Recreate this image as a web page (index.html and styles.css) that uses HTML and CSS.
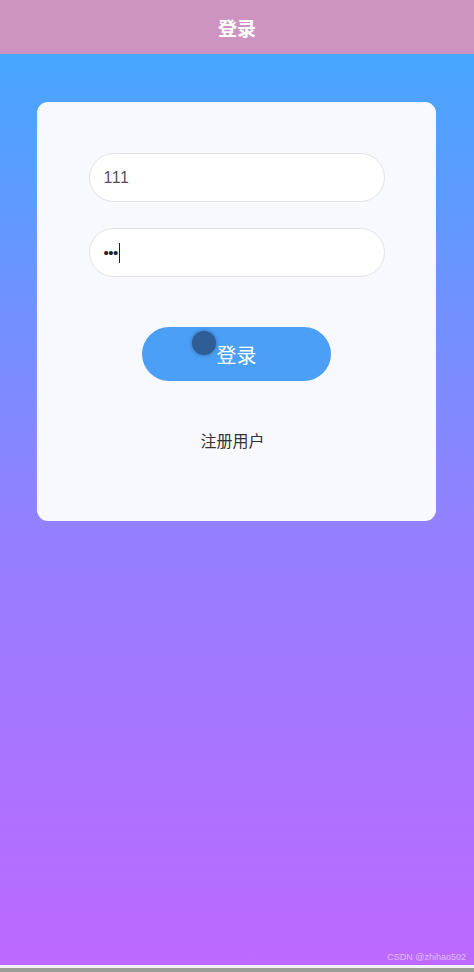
FILE: index.html
```html
<!DOCTYPE html>
<html lang="zh">
<head>
<meta charset="utf-8">
<link rel="stylesheet" href="styles.css">
</head>
<body>
<div class="page">
  <header class="topbar">登录</header>
  <main class="content">
    <section class="card">
      <div class="field"><span class="value">111</span></div>
      <div class="field"><span class="dots">•••</span><span class="caret"></span></div>
      <div class="btn-row">
        <div class="btn">登录<span class="ripple"></span></div>
      </div>
      <div class="register">注册用户</div>
    </section>
    <div class="watermark">CSDN @zhihao502</div>
  </main>
  <div class="bottom-white"></div>
  <div class="bottom-gray"></div>
</div>
</body>
</html>
```
FILE: styles.css
```css
html, body { margin: 0; padding: 0; }
body { font-family: "Liberation Sans", "Noto Sans CJK SC", sans-serif; }
.page { width: 474px; height: 972px; display: flex; flex-direction: column; overflow: hidden; }
.topbar {
  height: 54px; flex: none; background: #cd94c2; color: #fff;
  font-size: 19px; font-weight: bold; display: flex; align-items: center; justify-content: center;
  font-family: "Noto Sans CJK SC", sans-serif;
}
.content {
  flex: 1; position: relative;
  background: linear-gradient(to bottom, #47a6fe 0%, #9480fe 52%, #bd69ff 100%);
  padding: 48px 38px 0 37px;
}
.card {
  background: #f8f9fe; border-radius: 11px; height: 419px;
  display: flex; flex-direction: column; align-items: center;
  padding-top: 51px; box-sizing: border-box;
}
.field {
  width: 296px; height: 49px; box-sizing: border-box; border: 1px solid #e2e2e6;
  border-radius: 25px; background: #fff; display: flex; align-items: center;
  padding-left: 14px; margin-bottom: 26px; color: #555; font-size: 16px;
}
.field + .field { margin-bottom: 0; }
.value { letter-spacing: 0.5px; }
.dots { font-size: 15px; letter-spacing: -0.5px; color: #222; }
.caret { width: 1px; height: 20px; background: #222; margin-left: 1px; }
.btn-row { margin-top: 50px; }
.btn {
  position: relative; width: 189px; height: 54px; border-radius: 27px; background: #4b9ff6;
  color: #fff; font-size: 20px; display: flex; align-items: center; justify-content: center;
  font-family: "Noto Sans CJK SC", sans-serif;
}
.ripple {
  position: absolute; left: 50px; top: 4px; width: 24px; height: 24px; border-radius: 50%;
  background: #2f5e97; box-shadow: 0 0 3px 1px rgba(47,94,151,0.5);
}
.register {
  margin-top: 47px; margin-right: 8px; font-size: 16px; color: #333; font-family: "Noto Sans CJK SC", sans-serif;
}
.watermark {
  position: absolute; right: 8px; bottom: 3px; font-size: 9px; color: rgba(255,255,255,0.55);
}
.bottom-white { height: 3px; background: #f4f0f8; flex: none; }
.bottom-gray { height: 4px; background: #9a9d96; flex: none; }
```
